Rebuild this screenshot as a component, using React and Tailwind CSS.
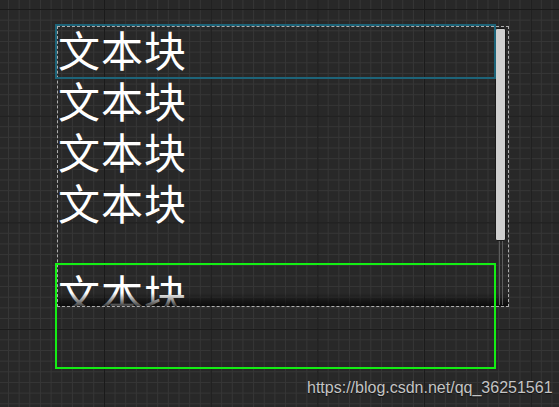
import React from 'react';

const cjk = "font-['Noto_Sans_CJK_SC','Noto_Sans',sans-serif]";

const TextBlock = ({ className = '' }) => (
  <div className={`h-[51px] text-[42px] leading-[51px] tracking-[1px] text-white ${cjk} ${className}`}>
    文本块
  </div>
);

export default function App() {
  return (
    <div className="relative h-[407px] w-[559px] overflow-hidden bg-[#282828] bg-[linear-gradient(to_right,#1a1a1a_1px,transparent_1px),linear-gradient(to_bottom,#1a1a1a_1px,transparent_1px),linear-gradient(to_right,#363636_1px,transparent_1px),linear-gradient(to_bottom,#363636_1px,transparent_1px)] bg-size-[106.667px_106.667px,106.667px_106.667px,10.667px_10.667px,10.667px_10.667px] bg-position-[104px_9px,104px_9px,8px_9px,8px_9px]">
      {/* scroll view viewport */}
      <div className="absolute left-[57px] top-[26px] h-[281px] w-[452px] overflow-hidden border border-dashed border-[#aeaeae]">
        <div className="-mt-[4px] flex flex-col">
          <TextBlock />
          <TextBlock />
          <TextBlock />
          <TextBlock />
          <TextBlock className="mt-[40px]" />
        </div>
        <div className="absolute inset-x-0 bottom-0 h-[13px] bg-linear-to-b from-transparent to-[#000000c0]" />

        {/* scrollbar */}
        <div className="absolute right-[2px] top-[1px] bottom-[1px] flex w-[11px] flex-col items-center">
          <div className="h-[213px] w-[11px] rounded-[2px] border border-[#1a1a1a] bg-[#d0d0d0]" />
          <div className="w-[4px] flex-1 border-x border-[#5c5c5c]" />
        </div>
      </div>

      {/* selected item */}
      <div className="absolute left-[55px] top-[24px] h-[55px] w-[441px] border-2 border-[#1d6479]" />

      {/* content rect */}
      <div className="absolute left-[55px] top-[263px] h-[106px] w-[441px] border-2 border-[#14ee14]" />

      <div className="absolute left-[307px] top-[380px] font-['Liberation_Sans',Arial,sans-serif] text-[16px] leading-none text-[#c4c4c4] [text-shadow:0_1px_1px_#111]">
        https://blog.csdn.net/qq_36251561
      </div>
    </div>
  );
}
